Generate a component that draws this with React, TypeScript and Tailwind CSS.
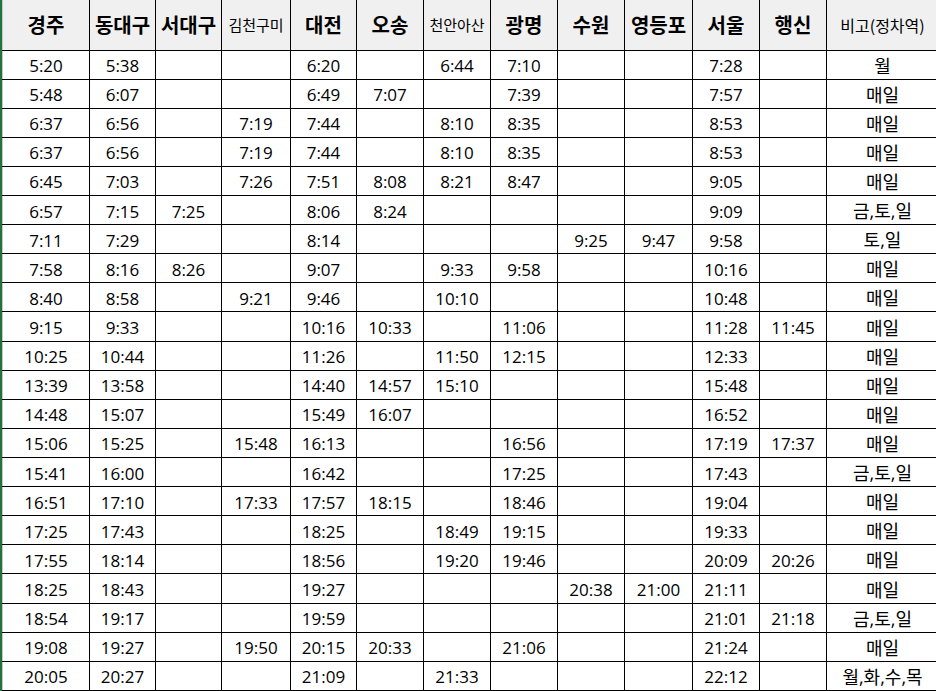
const heads: { label: string; small?: boolean }[] = [
  { label: "경주" },
  { label: "동대구" },
  { label: "서대구" },
  { label: "김천구미", small: true },
  { label: "대전" },
  { label: "오송" },
  { label: "천안아산", small: true },
  { label: "광명" },
  { label: "수원" },
  { label: "영등포" },
  { label: "서울" },
  { label: "행신" },
  { label: "비고(정차역)", small: true },
]

const widths = [
  "w-[87px]", "w-[66px]", "w-[66px]", "w-[69px]", "w-[66px]", "w-[67px]", "w-[67px]",
  "w-[67px]", "w-[67px]", "w-[68px]", "w-[67px]", "w-[67px]", "w-[112px]",
]

// 경주, 동대구, 서대구, 김천구미, 대전, 오송, 천안아산, 광명, 수원, 영등포, 서울, 행신, 비고
const rows: string[][] = [
  ["5:20", "5:38", "", "", "6:20", "", "6:44", "7:10", "", "", "7:28", "", "월"],
  ["5:48", "6:07", "", "", "6:49", "7:07", "", "7:39", "", "", "7:57", "", "매일"],
  ["6:37", "6:56", "", "7:19", "7:44", "", "8:10", "8:35", "", "", "8:53", "", "매일"],
  ["6:37", "6:56", "", "7:19", "7:44", "", "8:10", "8:35", "", "", "8:53", "", "매일"],
  ["6:45", "7:03", "", "7:26", "7:51", "8:08", "8:21", "8:47", "", "", "9:05", "", "매일"],
  ["6:57", "7:15", "7:25", "", "8:06", "8:24", "", "", "", "", "9:09", "", "금,토,일"],
  ["7:11", "7:29", "", "", "8:14", "", "", "", "9:25", "9:47", "9:58", "", "토,일"],
  ["7:58", "8:16", "8:26", "", "9:07", "", "9:33", "9:58", "", "", "10:16", "", "매일"],
  ["8:40", "8:58", "", "9:21", "9:46", "", "10:10", "", "", "", "10:48", "", "매일"],
  ["9:15", "9:33", "", "", "10:16", "10:33", "", "11:06", "", "", "11:28", "11:45", "매일"],
  ["10:25", "10:44", "", "", "11:26", "", "11:50", "12:15", "", "", "12:33", "", "매일"],
  ["13:39", "13:58", "", "", "14:40", "14:57", "15:10", "", "", "", "15:48", "", "매일"],
  ["14:48", "15:07", "", "", "15:49", "16:07", "", "", "", "", "16:52", "", "매일"],
  ["15:06", "15:25", "", "15:48", "16:13", "", "", "16:56", "", "", "17:19", "17:37", "매일"],
  ["15:41", "16:00", "", "", "16:42", "", "", "17:25", "", "", "17:43", "", "금,토,일"],
  ["16:51", "17:10", "", "17:33", "17:57", "18:15", "", "18:46", "", "", "19:04", "", "매일"],
  ["17:25", "17:43", "", "", "18:25", "", "18:49", "19:15", "", "", "19:33", "", "매일"],
  ["17:55", "18:14", "", "", "18:56", "", "19:20", "19:46", "", "", "20:09", "20:26", "매일"],
  ["18:25", "18:43", "", "", "19:27", "", "", "", "20:38", "21:00", "21:11", "", "매일"],
  ["18:54", "19:17", "", "", "19:59", "", "", "", "", "", "21:01", "21:18", "금,토,일"],
  ["19:08", "19:27", "", "19:50", "20:15", "20:33", "", "21:06", "", "", "21:24", "", "매일"],
  ["20:05", "20:27", "", "", "21:09", "", "21:33", "", "", "", "22:12", "", "월,화,수,목"],
]

export default function App() {
  return (
    <div className="flex w-[936px] h-[691px] overflow-hidden bg-white text-black font-['Open_Sans','Noto_Sans_CJK_KR',sans-serif]">
      <div className="w-[2px] shrink-0 bg-[#217346]" />
      <table className="border-collapse table-fixed shrink-0">
        <colgroup>
          {widths.map((w, i) => (
            <col key={i} className={w} />
          ))}
        </colgroup>
        <thead>
          <tr>
            {heads.map((h, i) => (
              <th
                key={h.label}
                className={`h-[50px] p-0 border border-t-0 border-black bg-[#f0f0f0] text-center whitespace-nowrap font-['Noto_Sans_CJK_KR',sans-serif] ${
                  i === 0 ? "border-l-[#c8c8c8]" : ""
                } ${h.small ? (i === 12 ? "text-[16px] font-normal" : "text-[15px] font-normal") : "text-[20px] font-bold"}`}
              >
                {h.label}
              </th>
            ))}
          </tr>
        </thead>
        <tbody>
          {rows.map((r, ri) => (
            <tr key={ri}>
              {r.map((c, ci) => (
                <td
                  key={ci}
                  className={`h-[29px] p-0 pt-[2px] border border-black text-center text-[17px] leading-none whitespace-nowrap ${
                    ci === 0 ? "border-l-[#c8c8c8]" : ""
                  } ${ci === 12 ? "text-[18px]" : ""}`}
                >
                  {c}
                </td>
              ))}
            </tr>
          ))}
        </tbody>
      </table>
    </div>
  )
}
